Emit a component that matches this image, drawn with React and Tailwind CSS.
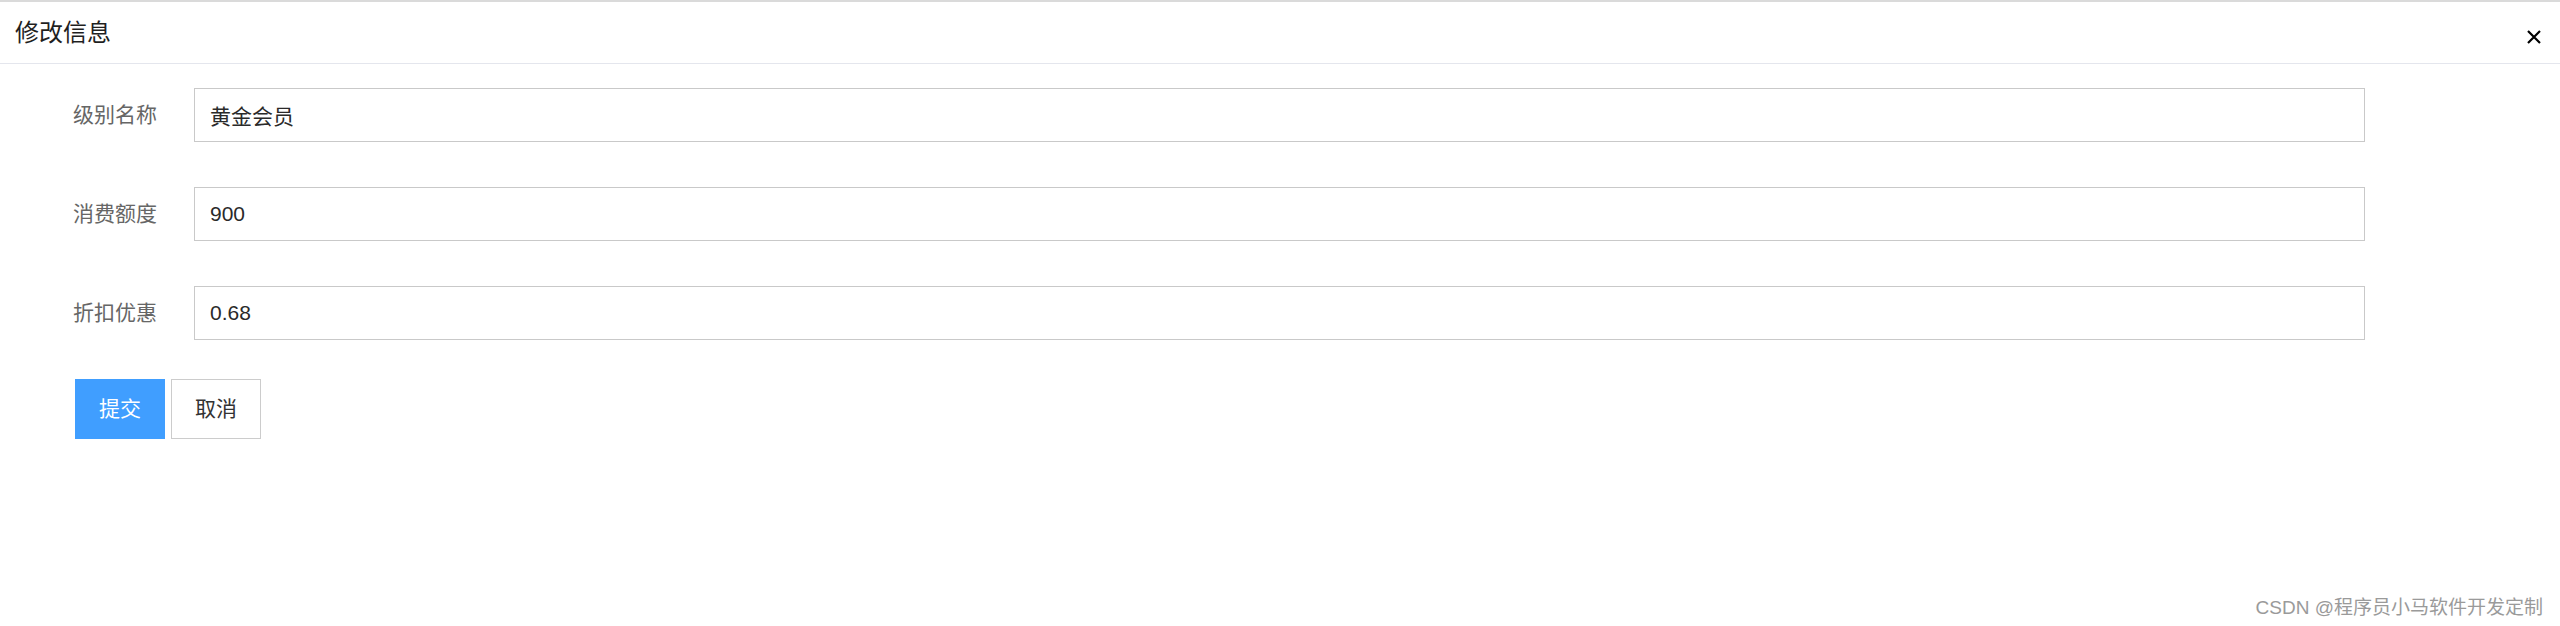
const fields = [
  { label: "级别名称", value: "黄金会员" },
  { label: "消费额度", value: "900" },
  { label: "折扣优惠", value: "0.68" },
];

export default function App() {
  return (
    <div className="relative w-full h-[626px] bg-white border-t-2 border-[#dadada] font-['Liberation_Sans','Noto_Sans_CJK_SC',sans-serif]">
      {/* header */}
      <div className="flex items-center justify-between h-[62px] pl-[15px] pr-[19px] border-b border-[#e4e6ed]">
        <span className="text-[24px] text-[#1f1f1f] leading-none">修改信息</span>
        <svg width="14" height="14" viewBox="0 0 14 14" className="mt-[8px]">
          <path d="M1 1 L13 13 M13 1 L1 13" stroke="#000" strokeWidth="2.2" />
        </svg>
      </div>

      {/* form */}
      <div className="pt-[24px] flex flex-col gap-[45px]">
        {fields.map((f) => (
          <div key={f.label} className="flex items-center">
            <label className="w-[194px] pl-[73px] text-[21px] text-[#666]">{f.label}</label>
            <input
              readOnly
              value={f.value}
              className="w-[2171px] h-[54px] border border-[#c9c9c9] px-[15px] text-[21px] font-normal text-[#2a2a2a] outline-none"
            />
          </div>
        ))}
      </div>

      <div className="flex gap-[6px] pl-[75px] mt-[39px]">
        <button className="w-[90px] h-[60px] bg-[#409eff] text-white text-[21px]">提交</button>
        <button className="w-[90px] h-[60px] bg-white border border-[#cccccc] text-[#333] text-[21px]">取消</button>
      </div>

      {/* watermark */}
      <div className="absolute right-[17px] bottom-[4px] text-[19px] text-[#9a9a9a] [text-shadow:0_0_1px_#fff]">
        CSDN @程序员小马软件开发定制
      </div>
    </div>
  );
}
